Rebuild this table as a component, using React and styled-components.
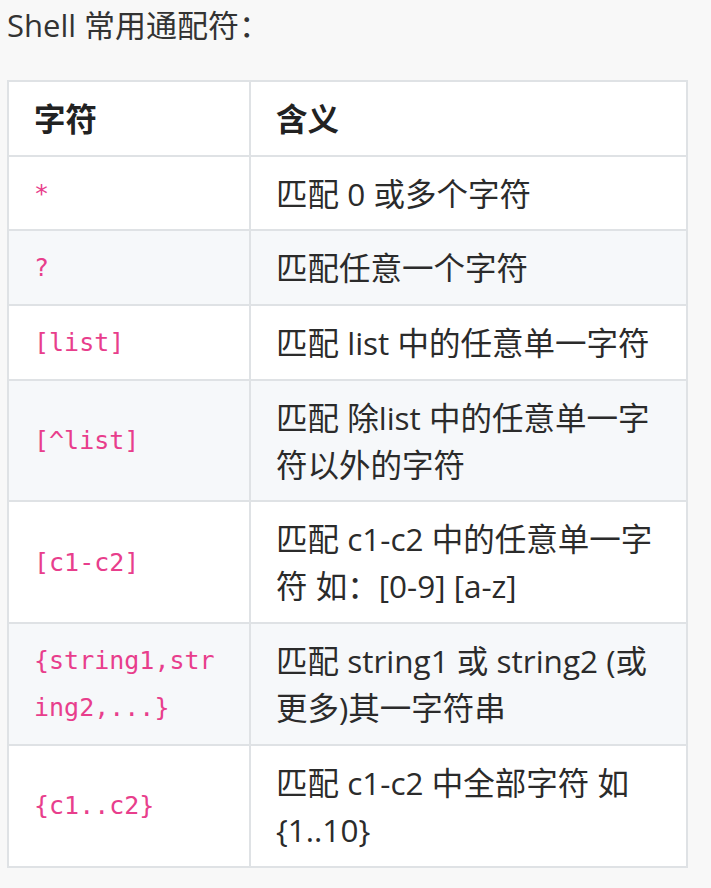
import styled, { createGlobalStyle } from 'styled-components';

const GlobalStyle = createGlobalStyle`
  body {
    margin: 0;
    background-color: #f8f8f8;
    font-family: "Open Sans", "Noto Sans CJK SC", sans-serif;
    color: #333;
  }
`;

const Page = styled.div`
  padding: 2px 7px 0;
`;

const Title = styled.p`
  margin: 0 0 31px;
  font-size: 31px;
  line-height: 47px;
  color: #333;
`;

const Table = styled.table`
  width: 681px;
  border-collapse: collapse;
  table-layout: fixed;
  font-size: 31.5px;
  line-height: 47px;
`;

const Row = styled.tr`
  background-color: ${(p) => (p.$striped ? '#f6f8fa' : '#ffffff')};
`;

const HeadCell = styled.th`
  border: 2px solid #dfe2e5;
  padding: 12.85px 20px 12.85px 25px;
  text-align: left;
  font-weight: 700;
  color: #222;
`;

const Cell = styled.td`
  border: 2px solid #dfe2e5;
  padding: 12.85px 20px 12.85px 25px;
  vertical-align: middle;
  color: #2b2b2b;
`;

const Code = styled.code`
  display: block;
  font-family: "DejaVu Sans Mono", "Liberation Mono", monospace;
  font-size: 25px;
  line-height: 47px;
  color: #e83e8c;
  word-break: break-all;
`;

const rows = [
  ['*', '匹配 0 或多个字符'],
  ['?', '匹配任意一个字符'],
  ['[list]', '匹配 list 中的任意单一字符'],
  ['[^list]', '匹配 除list 中的任意单一字符以外的字符'],
  ['[c1-c2]', '匹配 c1-c2 中的任意单一字符 如：[0-9] [a-z]'],
  ['{string1,string2,...}', '匹配 string1 或 string2 (或更多)其一字符串'],
  ['{c1..c2}', '匹配 c1-c2 中全部字符 如{1..10}'],
];

const App = () => {
  return (
    <Page>
      <GlobalStyle />
      <Title>Shell 常用通配符：</Title>
      <Table>
        <colgroup>
          <col style={{ width: '242px' }} />
          <col />
        </colgroup>
        <thead>
          <Row>
            <HeadCell>字符</HeadCell>
            <HeadCell>含义</HeadCell>
          </Row>
        </thead>
        <tbody>
          {rows.map(([pattern, meaning], i) => (
            <Row key={pattern} $striped={i % 2 === 1}>
              <Cell>
                <Code>{pattern}</Code>
              </Cell>
              <Cell>{meaning}</Cell>
            </Row>
          ))}
        </tbody>
      </Table>
    </Page>
  );
};

export default App;
